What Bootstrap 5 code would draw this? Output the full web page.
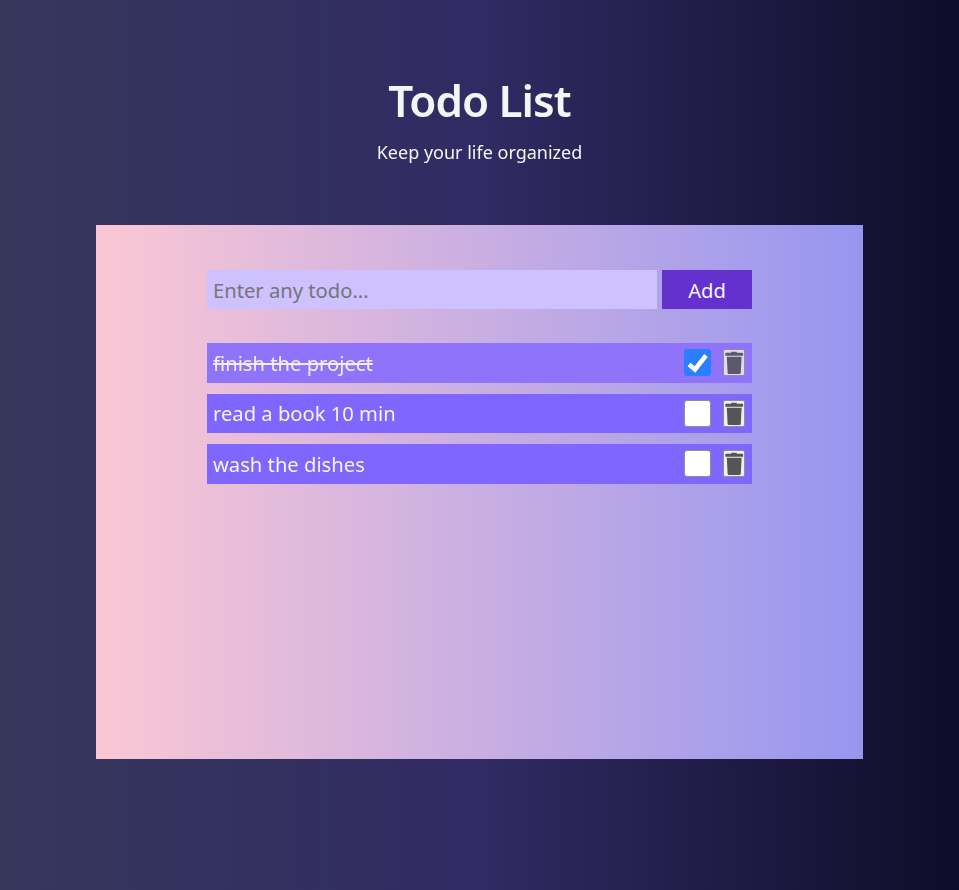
<!DOCTYPE html>
<html lang="en">
<head>
<meta charset="utf-8">
<title>Todo List</title>
<link href="https://cdn.jsdelivr.net/npm/bootstrap@5.3.0/dist/css/bootstrap.min.css" rel="stylesheet">
<style>
html, body { height: 100%; }
body {
  font-family: "Noto Sans", sans-serif;
  background: linear-gradient(to left, #0f0c29, #302b63, #37375c);
  color: #f5f5f5;
  min-height: 890px;
}
.hero { padding-top: 70px; height: 225px; }
.hero-title { font-size: 44px; font-weight: 600; line-height: 60px; letter-spacing: -1px; margin: 0 0 9px; will-change: opacity; }
.hero-sub { font-size: 18px; line-height: 26px; margin: 0; will-change: opacity; }
.panel { width: 767px; height: 534px; background: linear-gradient(to right, #fbc7d4, #9796f0); padding-top: 45px; }
.inner { width: 545px; }
.todo-input { width: 450px; height: 39px; border: 0; border-radius: 0; background: #cdc1ff; font-size: 20.2px; padding: 1px 6px 0 6px; color: #333; outline: 0; will-change: opacity; }
.todo-input::placeholder { color: #757575; }
.add-btn { width: 90px; height: 39px; border: 0; border-radius: 0; background: #6431cf; color: #f5f5f5; font-size: 20.2px; padding: 1px 0 0; will-change: opacity; }
.todo-list { margin-top: 34px; gap: 11px; }
.todo-row { height: 39.5px; background: #7f66ff; color: #f5f5f5; font-size: 20.2px; padding: 0 6px; }
.todo-row.is-done { background: #8f74fb; }
.todo-text { padding-top: .6px; will-change: opacity; }
.is-done .todo-text { text-decoration: line-through; opacity: .95; }
.todo-check { width: 27px; height: 27px; margin: 0 12px 0 0; border-radius: 3px; border: 1px solid #8f8f8f; background: #fff; flex: none; }
.is-done .todo-check { background: #2a7fff; border: 0; }
.is-done .todo-check svg { display: block; }
.todo-check svg { display: none; width: 100%; height: 100%; }
.trash-btn { width: 22px; height: 27px; background: #efefef; border: 1px solid #8f8f8f; border-radius: 2px; padding: 0; flex: none; margin-right: 1px; overflow: hidden; }
.trash-btn svg { display: block; width: 22px; height: 27px; margin: -1px; }
.is-done .trash-btn { opacity: .85; }
</style>
</head>
<body>
<header class="hero text-center">
  <h1 class="hero-title">Todo List</h1>
  <p class="hero-sub">Keep your life organized</p>
</header>
<main class="panel mx-auto">
  <div class="inner mx-auto">
    <form class="d-flex justify-content-between">
      <input class="todo-input" type="text" placeholder="Enter any todo...">
      <button class="add-btn" type="button">Add</button>
    </form>
    <ul class="todo-list list-unstyled d-flex flex-column">
      <li class="todo-row is-done d-flex align-items-center">
        <span class="todo-text flex-grow-1">finish the project</span>
        <span class="todo-check"><svg viewBox="0 0 27 27"><path d="M5 15.500 11 20.500 22 6.500" fill="none" stroke="#fff" stroke-width="4.500"/></svg></span>
        <button class="trash-btn" type="button"><svg viewBox="0 0 22 27"><path d="M8.200 2.800h5.600v1h5.700a.7.7 0 0 1 .6.700v2.200h-17.800v-2.200a.7.7 0 0 1 .6-.700h5.300z" fill="#555"/><path d="M3.800 7.800h14.800l-.8 16a1.500 1.500 0 0 1-1.500 1.300h-10.200a1.500 1.500 0 0 1-1.500-1.300z" fill="#555"/></svg></button>
      </li>
      <li class="todo-row d-flex align-items-center">
        <span class="todo-text flex-grow-1">read a book 10 min</span>
        <span class="todo-check"></span>
        <button class="trash-btn" type="button"><svg viewBox="0 0 22 27"><path d="M8.200 2.800h5.600v1h5.700a.7.7 0 0 1 .6.700v2.200h-17.800v-2.200a.7.7 0 0 1 .6-.700h5.300z" fill="#555"/><path d="M3.800 7.800h14.800l-.8 16a1.500 1.500 0 0 1-1.500 1.300h-10.200a1.500 1.500 0 0 1-1.500-1.300z" fill="#555"/></svg></button>
      </li>
      <li class="todo-row d-flex align-items-center">
        <span class="todo-text flex-grow-1">wash the dishes</span>
        <span class="todo-check"></span>
        <button class="trash-btn" type="button"><svg viewBox="0 0 22 27"><path d="M8.200 2.800h5.600v1h5.700a.7.7 0 0 1 .6.700v2.200h-17.800v-2.200a.7.7 0 0 1 .6-.700h5.300z" fill="#555"/><path d="M3.800 7.800h14.800l-.8 16a1.500 1.500 0 0 1-1.500 1.300h-10.200a1.500 1.500 0 0 1-1.500-1.300z" fill="#555"/></svg></button>
      </li>
    </ul>
  </div>
</main>
<script src="https://cdn.jsdelivr.net/npm/bootstrap@5.3.0/dist/js/bootstrap.bundle.min.js"></script>
</body>
</html>
